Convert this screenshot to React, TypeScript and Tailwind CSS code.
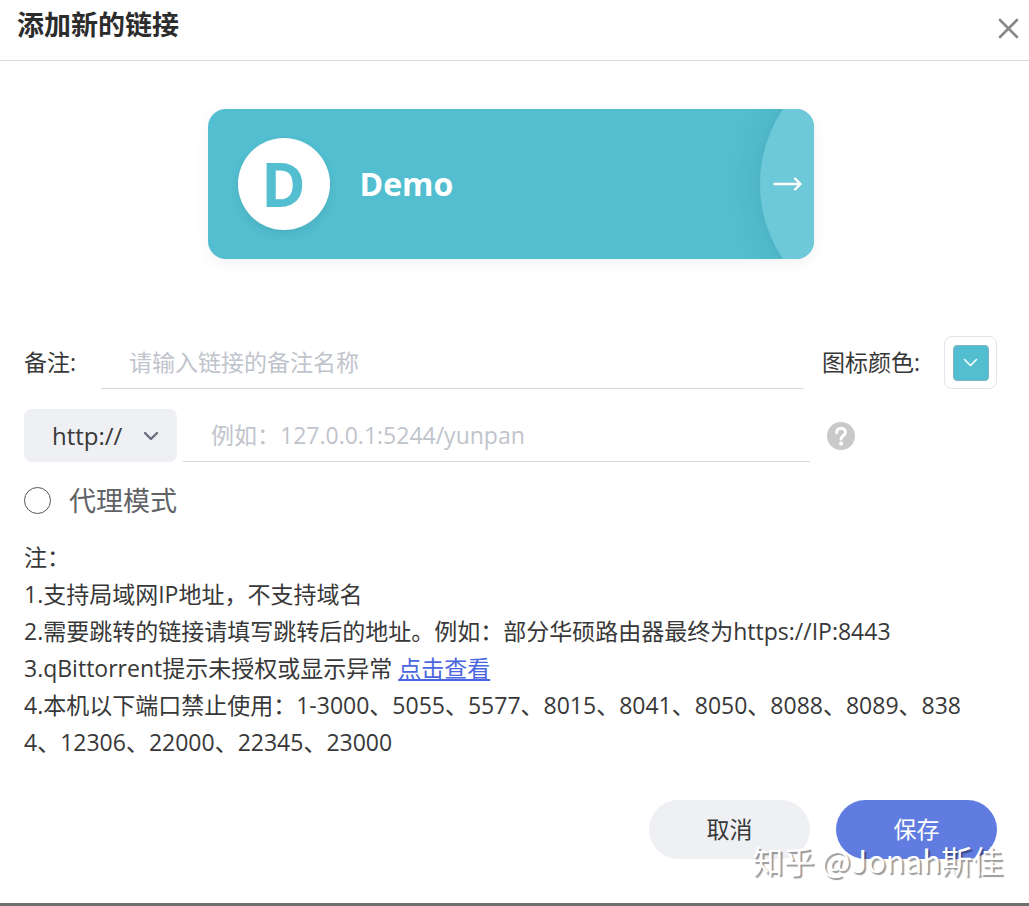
import { useState } from "react";

const notes = ["1.支持局域网IP地址，不支持域名", "2.需要跳转的链接请填写跳转后的地址。例如：部分华硕路由器最终为https://IP:8443"];

const portNote = "4.本机以下端口禁止使用：1-3000、5055、5577、8015、8041、8050、8088、8089、8384、12306、22000、22345、23000";

function LinkPreview({ name }: { name: string }) {
  return (
    <div className="relative mx-auto flex h-[150px] w-full max-w-[606px] items-center gap-[30px] overflow-hidden rounded-[18px] bg-[#52bed0] px-[30px] shadow-[0_4px_16px_rgba(0,0,0,0.06)]">
      <div className="flex size-[92px] shrink-0 items-center justify-center rounded-full bg-white text-[60px] leading-none font-bold text-[#52bed0] shadow-[0_4px_10px_rgba(0,0,0,0.08)]">
        {name.charAt(0)}
      </div>
      <span className="text-[32px] leading-none font-bold text-white">{name}</span>
      {/* oversized disc clipped by the card edge */}
      <div className="absolute top-1/2 -right-[214px] size-[268px] -translate-y-1/2 rounded-full bg-[#6dc9d8] shadow-[0_0_36px_rgba(0,0,0,0.1)]" />
      <svg className="absolute top-1/2 right-[11px] h-4 w-[30px] -translate-y-1/2" viewBox="0 0 30 16" fill="none" stroke="white" strokeWidth={2.4} strokeLinecap="round" strokeLinejoin="round" aria-hidden="true">
        <path d="M1.500 8h26M22 2.500 27.500 8 22 13.500" />
      </svg>
    </div>
  );
}

export default function App() {
  const [remark, setRemark] = useState("");
  const [address, setAddress] = useState("");

  return (
    <div className="relative flex min-h-screen flex-col border-b-[3px] border-[#707070] bg-white font-['Open_Sans','Noto_Sans_CJK_SC',sans-serif] text-[23px] leading-[37px] text-[#383838]">
      <header className="flex h-[61px] items-center justify-between border-b border-[#dcdcdc] pr-[10px] pb-2 pl-[17px]">
        <h1 className="pb-1 text-[27px] font-bold text-[#2c2c2c]">添加新的链接</h1>
        <button type="button" aria-label="关闭" className="mt-1">
          <svg className="size-[21px]" viewBox="0 0 21 21" fill="none" stroke="#888" strokeWidth={2.6} strokeLinecap="round">
            <path d="M2 2l17 17M19 2 2 19" />
          </svg>
        </button>
      </header>

      <form className="flex flex-1 flex-col pt-12 pr-8 pb-11 pl-6" onSubmit={(e) => e.preventDefault()}>
        <LinkPreview name={remark || "Demo"} />

        <div className="mt-[77px] flex items-center">
          <label htmlFor="remark" className="w-[77px] shrink-0">
            备注:
          </label>
          <input
            id="remark"
            type="text"
            value={remark}
            onChange={(e) => setRemark(e.target.value)}
            placeholder="请输入链接的备注名称"
            className="h-[53px] min-w-0 flex-1 border-b border-[#d8d8d8] px-7 outline-none placeholder:text-[#c0c4cc]"
          />
          <label htmlFor="color" className="ml-[18px] shrink-0">
            图标颜色:
          </label>
          <button id="color" type="button" className="ml-6 flex size-[53px] shrink-0 items-center justify-center rounded-lg border border-[#e0e4ec]">
            <span className="flex size-9 items-center justify-center rounded border border-[#7fb3bf] bg-[#52bed0]">
              <svg className="h-[9px] w-[15px]" viewBox="0 0 15 9" fill="none" stroke="white" strokeWidth={1.6} strokeLinecap="round" strokeLinejoin="round">
                <path d="M1.500 1.500l6 6 6-6" />
              </svg>
            </span>
          </button>
        </div>

        <div className="mt-5 flex items-center">
          <div className="relative mr-[6px] w-[153px] shrink-0">
            <select aria-label="协议" className="h-[53px] w-full appearance-none rounded-lg bg-[#eff0f4] pl-7 text-[24px] outline-none">
              <option>http://</option>
              <option>https://</option>
            </select>
            <svg className="pointer-events-none absolute top-1/2 right-[18px] h-[10px] w-4 -translate-y-1/2" viewBox="0 0 16 10" fill="none" stroke="#6b6e7d" strokeWidth={2.4} strokeLinecap="round" strokeLinejoin="round" aria-hidden="true">
              <path d="M2 2l6 6 6-6" />
            </svg>
          </div>
          <input
            type="text"
            aria-label="链接地址"
            value={address}
            onChange={(e) => setAddress(e.target.value)}
            placeholder="例如：127.0.0.1:5244/yunpan"
            className="h-[53px] min-w-0 flex-1 border-b border-[#d8d8d8] px-7 outline-none placeholder:text-[#c0c4cc]"
          />
          <div className="flex w-[187px] shrink-0 pl-[17px]">
            <button type="button" aria-label="帮助">
              <svg className="size-7" viewBox="0 0 28 28" fill="none">
                <circle cx="14" cy="14" r="14" fill="#c9c9c9" />
                <path d="M9.600 10.800c0-2.700 1.800-4.500 4.400-4.500s4.500 1.600 4.500 4c0 3.200-4.400 3.400-4.400 6.700" stroke="white" strokeWidth={3} strokeLinecap="round" />
                <circle cx="14.100" cy="21.600" r="2.100" fill="white" />
              </svg>
            </button>
          </div>
        </div>

        <label className="mt-5 flex items-center gap-[18px] text-[27px] text-[#606266]">
          <input type="radio" name="proxy" className="size-[27px] appearance-none rounded-full border border-[#555] checked:border-8 checked:border-[#617ce0]" />
          代理模式
        </label>

        <div className="mt-5 break-all">
          <p>注：</p>
          {notes.map((note) => (
            <p key={note}>{note}</p>
          ))}
          <p>
            3.qBittorrent提示未授权或显示异常{" "}
            <a href="#help" className="text-[#4a66e0] underline">
              点击查看
            </a>
          </p>
          <p>{portNote}</p>
        </div>

        <div className="mt-auto flex justify-end gap-[26px]">
          <button type="button" className="h-[59px] w-[161px] rounded-full bg-[#eff0f4]">
            取消
          </button>
          <button type="submit" className="h-[59px] w-[161px] rounded-full bg-[#617ce0] text-white">
            保存
          </button>
        </div>
      </form>

      <span className="pointer-events-none absolute right-[26px] bottom-[25px] font-['Noto_Sans_CJK_SC',sans-serif] text-[31px] text-white [text-shadow:2px_2px_1px_rgba(0,0,0,0.4)]">知乎 @Jonah斯佳</span>
    </div>
  );
}
